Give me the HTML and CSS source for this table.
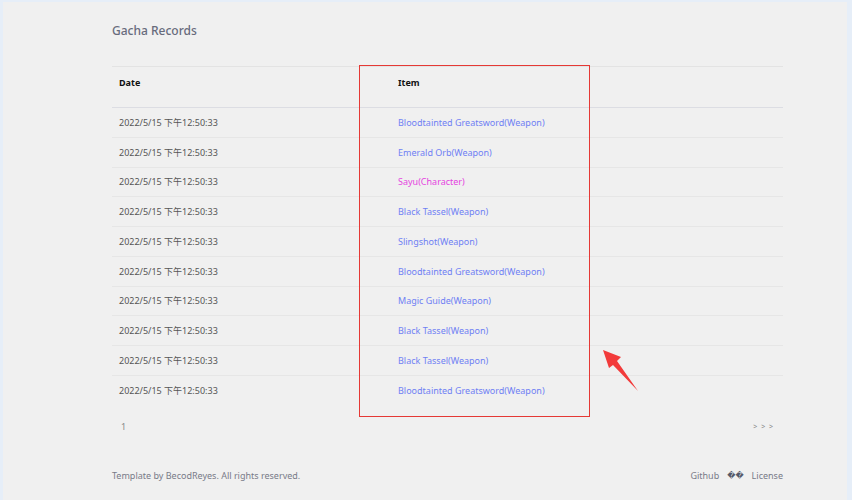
FILE: index.html
```html
<!DOCTYPE html>
<html>
<head>
<meta charset="utf-8">
<link rel="stylesheet" href="styles.css">
</head>
<body>
<div class="frame">
  <div class="container">
    <h1 class="title">Gacha Records</h1>
    <div class="table">
      <div class="row head"><div class="c-date">Date</div><div class="c-item">Item</div></div>
      <div class="row"><div class="c-date">2022/5/15 下午12:50:33</div><div class="c-item weapon">Bloodtainted Greatsword(Weapon)</div></div>
      <div class="row"><div class="c-date">2022/5/15 下午12:50:33</div><div class="c-item weapon">Emerald Orb(Weapon)</div></div>
      <div class="row"><div class="c-date">2022/5/15 下午12:50:33</div><div class="c-item char">Sayu(Character)</div></div>
      <div class="row"><div class="c-date">2022/5/15 下午12:50:33</div><div class="c-item weapon">Black Tassel(Weapon)</div></div>
      <div class="row"><div class="c-date">2022/5/15 下午12:50:33</div><div class="c-item weapon">Slingshot(Weapon)</div></div>
      <div class="row"><div class="c-date">2022/5/15 下午12:50:33</div><div class="c-item weapon">Bloodtainted Greatsword(Weapon)</div></div>
      <div class="row"><div class="c-date">2022/5/15 下午12:50:33</div><div class="c-item weapon">Magic Guide(Weapon)</div></div>
      <div class="row"><div class="c-date">2022/5/15 下午12:50:33</div><div class="c-item weapon">Black Tassel(Weapon)</div></div>
      <div class="row"><div class="c-date">2022/5/15 下午12:50:33</div><div class="c-item weapon">Black Tassel(Weapon)</div></div>
      <div class="row last"><div class="c-date">2022/5/15 下午12:50:33</div><div class="c-item weapon">Bloodtainted Greatsword(Weapon)</div></div>
    </div>
    <div class="pager"><span class="page">1</span><span class="next">&gt; &gt; &gt;</span></div>
    <footer class="footer">
      <span>Template by BecodReyes. All rights reserved.</span>
      <span class="links"><span>Github</span><span class="bad">&#xFFFD;&#xFFFD;</span><span>License</span></span>
    </footer>
  </div>
  <div class="highlight"></div>
  <svg class="arrow" width="60" height="60" viewBox="0 0 60 60">
    <polygon points="2,2 20,9 16,13 37,43 12,17 8,20" fill="#f23b3b"/>
  </svg>
</div>
</body>
</html>
```
FILE: styles.css
```css
html, body {
  margin: 0;
  padding: 0;
}
body {
  background: #e6eef8;
  font-family: "Noto Sans", "Noto Sans CJK SC", sans-serif;
  width: 852px;
  height: 500px;
  overflow: hidden;
}
.frame {
  position: relative;
  margin: 2px 5px 0 3px;
  height: 498px;
  background: #f0f0f0;
}
.container {
  padding: 0 64px 0 109px;
}
.title {
  margin: 0;
  padding-top: 20px;
  height: 44px;
  font-size: 12px;
  font-weight: 500;
  color: #676b7c;
  line-height: 18px;
}
.table {
  border-top: 1px solid #e3e3e3;
}
.row {
  display: grid;
  grid-template-columns: 279px 1fr;
  height: 28.75px;
  align-items: center;
  border-bottom: 1px solid #e6e6e6;
  font-size: 9px;
  color: #555;
}
.row.head {
  height: 40px;
  align-items: start;
  border-bottom: 1px solid #dcdde3;
  font-weight: 700;
  color: #111;
}
.row.head > div {
  padding-top: 9px;
}
.row.last {
  border-bottom: none;
}
.c-date, .c-item {
  padding-left: 7px;
  white-space: nowrap;
}
.weapon {
  color: #6f80f4;
}
.char {
  color: #e544e0;
}
.pager {
  display: flex;
  justify-content: space-between;
  font-size: 9px;
  color: #8a8a8a;
  margin-top: 15px;
  height: 14px;
  line-height: 14px;
}
.page {
  padding-left: 9px;
}
.next {
  font-size: 7px;
  letter-spacing: 1px;
  padding-right: 9px;
}
.footer {
  display: flex;
  justify-content: space-between;
  font-size: 9px;
  color: #787b88;
  margin-top: 35px;
  line-height: 14px;
}
.links {
  display: flex;
  gap: 8px;
}
.bad {
  color: #555a6b;
  font-family: "DejaVu Sans", sans-serif;
  font-size: 8px;
}
.highlight {
  position: absolute;
  left: 356px;
  top: 63px;
  width: 229px;
  height: 350px;
  border: 1px solid #e53935;
}
.arrow {
  position: absolute;
  left: 598px;
  top: 346px;
}
```
